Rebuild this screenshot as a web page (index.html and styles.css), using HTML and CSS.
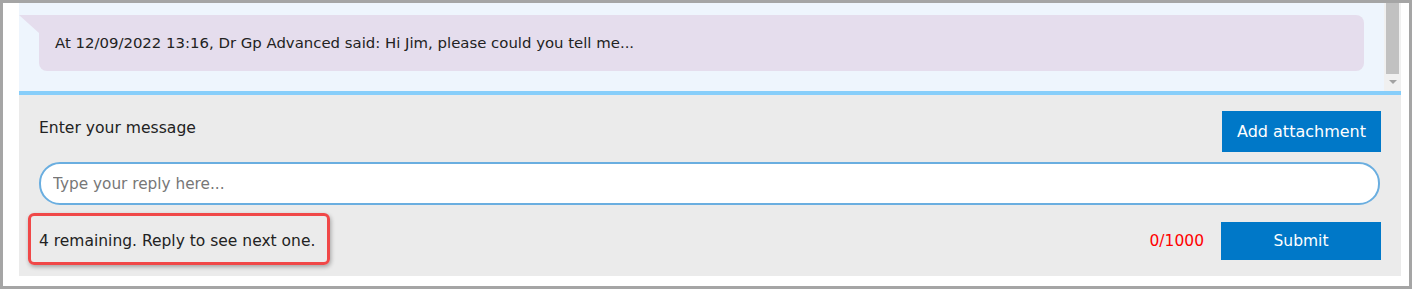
FILE: index.html
```html
<!DOCTYPE html>
<html>
	<head>
		<meta charset="UTF-8">
		<title>Reply</title>
		<link rel="stylesheet" href="styles.css">
	</head>
	<body>
		<div class="frame">
			<div class="panel">
				<div class="thread">
					<div class="messages">
						<div class="bubble">At 12/09/2022 13:16, Dr Gp Advanced said: Hi Jim, please could you tell me...</div>
					</div>
					<div class="scrollbar">
						<div class="thumb"></div>
						<div class="arrow"></div>
					</div>
				</div>
				<div class="reply">
					<div class="reply-top">
						<label class="label" for="msg">Enter your message</label>
						<button class="btn btn-attach">Add attachment</button>
					</div>
					<input id="msg" class="input" type="text" placeholder="Type your reply here...">
					<div class="reply-bottom">
						<span class="remaining">4 remaining. Reply to see next one.</span>
						<span class="count">0/1000</span>
						<button class="btn btn-submit">Submit</button>
					</div>
				</div>
			</div>
		</div>
	</body>
</html>
```

FILE: styles.css
```css
	*{
		box-sizing: border-box;
	}
	body{
		margin: 0;
		font-family: "DejaVu Sans", sans-serif;
		color: #222;
	}
	.frame{
		width: 1412px;
		height: 289px;
		border: 3px solid #a5a5a5;
		background: #fff;
		padding: 0 8px 10px 16px;
	}
	.panel{
		width: 1382px;
	}
	.thread{
		display: flex;
		height: 92px;
		background: #eef5fd;
		border-bottom: 4px solid #87cefa;
	}
	.messages{
		flex-grow: 1;
		padding: 12px 20px 0 20px;
	}
	.bubble{
		position: relative;
		height: 56px;
		background: #e5dded;
		border-radius: 0 8px 8px 8px;
		padding: 0 16px;
		font-size: 14.9px;
		line-height: 56px;
		color: #222;
	}
	.bubble::before{
		content: "";
		position: absolute;
		left: -20px;
		top: 0;
		border-top: 18px solid #e5dded;
		border-left: 20px solid transparent;
	}
	.scrollbar{
		width: 17px;
		background: #f0f0f0;
		display: flex;
		flex-direction: column;
		align-items: center;
	}
	.thumb{
		width: 13px;
		height: 71px;
		background: #c1c1c1;
	}
	.arrow{
		margin-top: 6px;
		border-top: 4px solid #a3a3a3;
		border-left: 4px solid transparent;
		border-right: 4px solid transparent;
	}
	.reply{
		background: #ebebeb;
		padding: 16px 20px 16px 20px;
		height: 181px;
	}
	.reply-top{
		display: flex;
		justify-content: space-between;
		align-items: flex-start;
	}
	.label{
		margin-top: 6px;
		font-size: 15.6px;
		line-height: 22px;
		color: #222;
	}
	.btn{
		border: 0;
		background: #0078c8;
		color: #fff;
		font-family: "DejaVu Sans", sans-serif;
		font-size: 15.5px;
	}
	.btn-attach{
		width: 159px;
		height: 41px;
		font-size: 16px;
	}
	.input{
		display: block;
		width: 1341px;
		height: 43px;
		margin-top: 10px;
		border: 2px solid #6aaee0;
		border-radius: 21px;
		padding: 0 12px;
		font-family: "DejaVu Sans", sans-serif;
		font-size: 15.3px;
		background: #fff;
		outline: none;
	}
	.input::placeholder{
		color: #777;
	}
	.reply-bottom{
		display: flex;
		align-items: center;
		margin-top: 17px;
	}
	.remaining{
		position: relative;
		flex-grow: 1;
		font-size: 15.5px;
		color: #222;
	}
	.remaining::after{
		content: "";
		position: absolute;
		left: -11px;
		top: -19px;
		width: 296px;
		height: 46px;
		border: 3px solid #f04848;
		border-radius: 6px;
		box-shadow: 1px 2px 4px rgba(0, 0, 0, 0.3);
	}
	.count{
		color: #f00;
		font-size: 15.5px;
		margin-right: 17px;
	}
	.btn-submit{
		width: 160px;
		height: 38px;
	}
```
